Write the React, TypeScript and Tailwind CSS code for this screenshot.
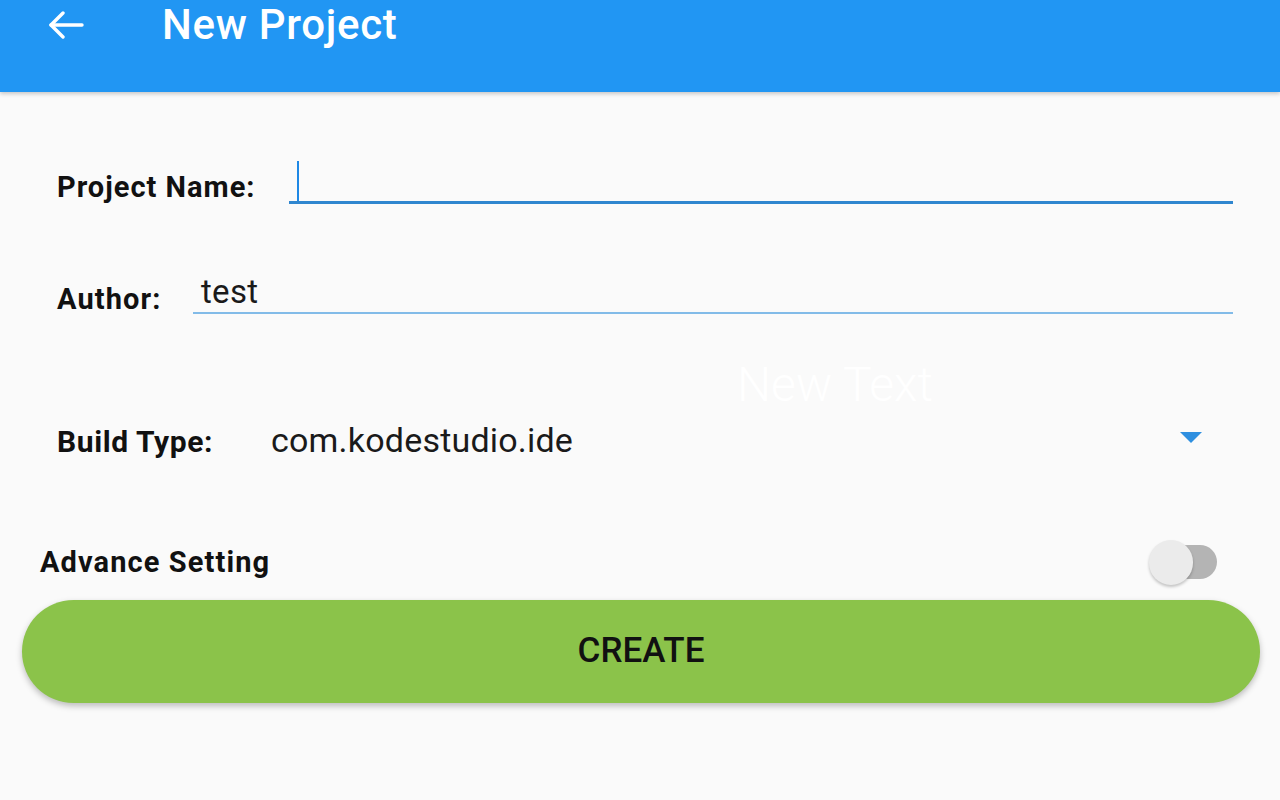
const font = { fontFamily: "Roboto, 'Noto Sans', sans-serif" };

function BackArrow() {
	return (
		<svg width="36" height="28" viewBox="0 0 36 28" fill="none" stroke="white" strokeWidth="3.4" strokeLinecap="round" strokeLinejoin="round">
			<path d="M34 14H3" />
			<path d="M15 2 3 14l12 12" />
		</svg>
	);
}

function Toggle() {
	return (
		<div className="relative h-[45px] w-[68px] shrink-0">
			<div className="absolute left-[22px] top-[5px] h-[34px] w-[46px] rounded-full bg-[#b4b4b4]" />
			<div className="absolute left-0 top-0 h-[45px] w-[44px] rounded-full bg-[#ebebeb] shadow-[0_2px_3px_rgba(0,0,0,0.22)]" />
		</div>
	);
}

export default function App() {
	return (
		<div className="flex h-[800px] w-[1280px] flex-col overflow-hidden bg-[#fafafa]" style={font}>
			<header className="relative z-10 flex h-[92px] shrink-0 items-start bg-[#2196f3] shadow-[0_2px_4px_rgba(0,0,0,0.2)]">
				<div className="ml-[48px] mt-[11px]">
					<BackArrow />
				</div>
				<h1 className="ml-[78px] mt-[4px] text-[42px] font-medium leading-none tracking-[0.7px] text-white">New Project</h1>
			</header>

			<main className="flex flex-col pr-[47px]">
				<div className="mt-[70px] flex items-end pl-[57px]">
					<label className="w-[232px] shrink-0 pb-[2px] text-[29px] font-bold leading-none tracking-[1px] text-[#111]">
						Project Name:
					</label>
					<div className="relative h-[42px] flex-1 border-b-[3px] border-[#2f86cf]">
						<span className="absolute bottom-0 left-[8px] h-[40px] w-[2px] bg-[#1e88e5]" />
					</div>
				</div>

				<div className="mt-[68px] flex items-end pl-[57px]">
					<label className="w-[136px] shrink-0 text-[29px] font-bold leading-none tracking-[1.1px] text-[#111]">
						Author:
					</label>
					<div className="flex h-[42px] flex-1 items-end border-b-2 border-[#82bbe8] pb-[4px] pl-[8px]">
						<span className="text-[33px] leading-none tracking-[0.3px] text-[#1a1a1a]">test</span>
					</div>
				</div>

				<div className="mt-[47px] pl-[737px] text-[48px] font-light leading-none text-white">New Text</div>

				<div className="mt-[14px] flex items-baseline pl-[57px]">
					<label className="w-[214px] shrink-0 text-[30px] font-bold leading-none tracking-[0.6px] text-[#111]">
						Build Type:
					</label>
					<span className="flex-1 text-[34px] leading-none tracking-[0.2px] text-[#1a1a1a]">com.kodestudio.ide</span>
					<svg width="22" height="11" viewBox="0 0 22 11" className="mr-[31px] mt-[9px] self-start">
						<path d="M0 0h22L11 11z" fill="#2e8fe0" />
					</svg>
				</div>

				<div className="mt-[83px] flex items-center justify-between pl-[40px] pr-[16px]">
					<span className="text-[29px] font-bold leading-none tracking-[1.1px] text-[#111]">Advance Setting</span>
					<Toggle />
				</div>
			</main>

			<div className="ml-[22px] mr-[20px] mt-[15px]">
				<button
					type="button"
					className="flex h-[103px] w-full items-center justify-center rounded-full bg-[#8bc34a] text-[35px] font-medium text-[#111] shadow-[0_3px_6px_rgba(0,0,0,0.25)]"
				>
					CREATE
				</button>
			</div>
		</div>
	);
}
